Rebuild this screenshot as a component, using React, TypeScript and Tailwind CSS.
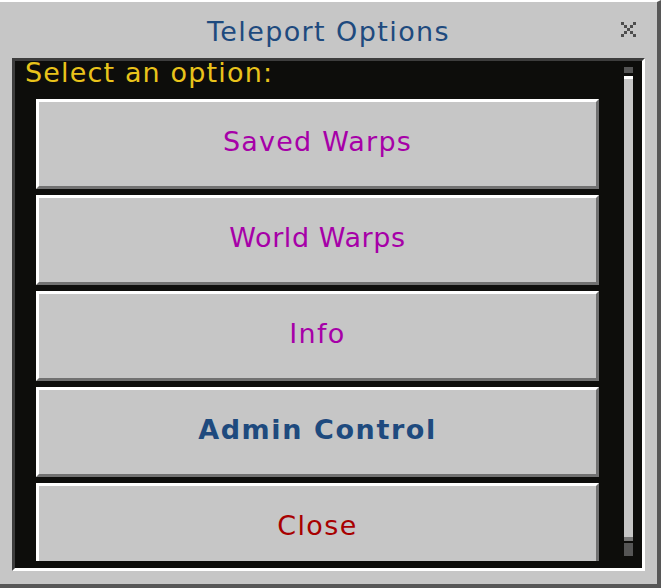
import React from "react";

const font = { fontFamily: '"DejaVu Sans", "Liberation Sans", sans-serif' };

function CloseX() {
  const on = [
    [1, 0, 0, 0, 1],
    [0, 1, 0, 1, 0],
    [0, 0, 1, 0, 0],
    [0, 1, 0, 1, 0],
    [1, 0, 0, 0, 1],
  ];
  return (
    <svg width="15" height="15" viewBox="0 0 15 15" shapeRendering="crispEdges">
      {on.map((row, y) =>
        row.map((v, x) =>
          v ? <rect key={`${x}-${y}`} x={x * 3} y={y * 3} width="3" height="3" fill="#4d4d4d" /> : null
        )
      )}
    </svg>
  );
}

function Btn({ label, cls }: { label: string; cls: string }) {
  return (
    <div className="h-[90px] shrink-0 bg-[#c6c6c6] border-t-[3px] border-l-[3px] border-t-white border-l-white border-r-[3px] border-b-[3px] border-r-[#717171] border-b-[#717171] flex items-center justify-center pb-[4px]">
      <span className={`text-[27px] leading-[20px] ${cls}`} style={font}>
        {label}
      </span>
    </div>
  );
}

export default function App() {
  return (
    <div className="w-[661px] h-[588px] bg-[#c6c6c6] border-t-2 border-t-white border-r-4 border-r-[#575757] border-b-4 border-b-[#575757] flex flex-col overflow-hidden">
      <div className="relative h-[56px] shrink-0 flex justify-center pt-[20px]">
        <span className="text-[27px] leading-[20px] tracking-[1.4px] text-[#1e4a7e]" style={font}>
          Teleport Options
        </span>
        <div className="absolute top-[20px] right-[21px]">
          <CloseX />
        </div>
      </div>
      <div className="ml-[12px] mr-[12px] h-[513px] shrink-0 border-t-[3px] border-l-[3px] border-t-[#3d3d3d] border-l-[#3d3d3d] border-r-[3px] border-b-[3px] border-r-white border-b-white bg-[#0d0d0b] flex">
        <div className="w-[609px] h-full pb-[7px] shrink-0 flex flex-col">
          <div className="mt-[2px] ml-[10px] text-[27px] leading-[20px] tracking-[1.15px] text-[#e9c31b]" style={font}>
            Select an option:
          </div>
          <div className="mt-[16px] flex-1 min-h-0 overflow-hidden">
            <div className="ml-[21px] w-[563px] flex flex-col gap-[6px]">
              <Btn label="Saved Warps" cls="text-[#a600a8] tracking-[1.2px]" />
              <Btn label="World Warps" cls="text-[#a600a8] tracking-[0.6px]" />
              <Btn label="Info" cls="text-[#a600a8] tracking-[1.3px]" />
              <Btn label="Admin Control" cls="text-[#1e4a7e] font-bold tracking-[1.6px]" />
              <Btn label="Close" cls="text-[#a80000] tracking-[1.4px]" />
            </div>
          </div>
        </div>
        <div className="w-[9px] shrink-0 flex flex-col pt-[6px]">
          <div className="h-[6px] bg-[#555555]" />
          <div className="h-[465px] mt-[3px] bg-[#c6c6c6] border-t-[3px] border-t-white border-b-4 border-b-[#757575]" />
          <div className="h-[13px] mt-[2px] bg-[#555555]" />
        </div>
      </div>
    </div>
  );
}
